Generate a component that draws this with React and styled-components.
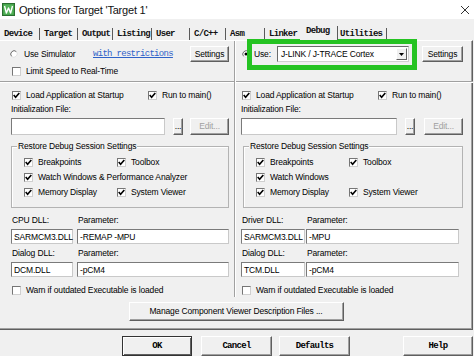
import React from 'react';
import styled, { createGlobalStyle, css } from 'styled-components';

const GlobalStyle = createGlobalStyle`
  html, body { margin: 0; padding: 0; background: #f0f0f0; overflow: hidden; }
  body {
    font-family: "Liberation Sans", Arial, sans-serif;
    font-size: 8.5px;
    letter-spacing: -0.15px;
    color: #000;
  }
  * { box-sizing: border-box; }
`;

const mono = css`
  font-family: "Liberation Mono", "Courier New", monospace;
  font-size: 9px;
  letter-spacing: -0.7px;
`;

const Window = styled.div`
  width: 474px;
  height: 356px;
  display: flex;
  flex-direction: column;
  background: #f0f0f0;
  overflow: hidden;
`;

const TitleBar = styled.div`
  height: 19px;
  flex: none;
  background: #fff;
  display: flex;
  align-items: center;
  padding: 0 4px 0 2px;
`;

const Title = styled.span`
  margin-left: 4px;
  font-size: 11px;
  letter-spacing: -0.2px;
  color: #111;
`;

const Close = styled.div`
  margin-left: auto;
  display: flex;
`;

const TabStrip = styled.div`
  height: 21px;
  flex: none;
  display: flex;
  align-items: flex-end;
`;

const Tab = styled.div`
  ${mono};
  font-weight: 600;
  width: ${(p) => p.$w}px;
  height: 12px;
  line-height: 12px;
  padding-left: 4px;
  white-space: nowrap;
  color: #111;
  border-right: 1px solid #5a5a5a;
  ${(p) =>
    p.$active &&
    css`
      height: 14px;
      line-height: 11px;
      margin: 0 -2px;
      padding-left: 6px;
      position: relative;
      z-index: 1;
      background: #f0f0f0;
    `}
`;

const Panel = styled.div`
  height: 290px;
  width: 473px;
  flex: none;
  display: flex;
  flex-direction: column;
  border-top: 1px solid #fff;
  border-right: 1px solid #5f5f5f;
  border-bottom: 1px solid #5f5f5f;
  box-shadow: inset -1px -1px 0 #a0a0a0;
`;

const Columns = styled.div`
  height: 256px;
  flex: none;
  display: flex;
`;

const Column = styled.div`
  display: flex;
  flex-direction: column;
  padding: 0 ${(p) => p.$pr}px 0 ${(p) => p.$pl}px;
  ${(p) =>
    p.$first
      ? css`
          width: 235px;
          border-right: 1px solid #a0a0a0;
        `
      : css`
          flex: 1;
          border-left: 1px solid #fff;
        `}
`;

const Row = styled.div`
  position: relative;
  display: flex;
  align-items: center;
  flex: none;
  height: ${(p) => p.$h}px;
  margin-top: ${(p) => p.$mt}px;
`;

const Separator = styled.div`
  flex: none;
  height: 2px;
  margin: 5px ${(p) => -p.$r}px 0 ${(p) => -p.$l}px;
  border-top: 1px solid #a0a0a0;
  border-bottom: 1px solid #fff;
`;

const Text = styled.span`
  white-space: nowrap;
  line-height: 10px;
`;

const CheckItem = styled.label`
  display: flex;
  align-items: center;
  height: 10px;
  flex: none;
  width: ${(p) => (p.$w ? `${p.$w}px` : 'auto')};
  margin-left: ${(p) => p.$ml || 0}px;
  gap: 5px;
`;

const Box = styled.span`
  width: 9px;
  height: 9px;
  flex: none;
  background: #fff;
  display: inline-flex;
  align-items: center;
  justify-content: center;
  border: 1px solid;
  border-color: #767676 #cfcfcf #cfcfcf #767676;
`;

const CheckBox = ({ checked }) => (
  <Box>
    {checked && (
      <svg width="7" height="7" viewBox="0 0 7 7">
        <path d="M0.7 3.1 L2.6 5.3 L6.3 0.9" fill="none" stroke="#000" strokeWidth="1.6" />
      </svg>
    )}
  </Box>
);

const Check = ({ checked, label, w, ml }) => (
  <CheckItem $w={w} $ml={ml}>
    <CheckBox checked={checked} />
    <Text>{label}</Text>
  </CheckItem>
);

const RadioWrap = styled.span`
  display: flex;
  align-items: center;
  width: ${(p) => (p.$w ? `${p.$w}px` : 'auto')};
  margin-left: ${(p) => p.$ml}px;
  gap: 6px;
`;

const Radio = ({ checked }) => (
  <svg width="8" height="8" viewBox="0 0 8 8">
    <circle cx="4" cy="4" r="3.4" fill="#fff" />
    <path d="M6.4 1.6 A3.4 3.4 0 0 0 1.6 6.4" fill="none" stroke="#6a6a6a" strokeWidth="1" />
    <path d="M1.6 6.4 A3.4 3.4 0 0 0 6.4 1.6" fill="none" stroke="#e0e0e0" strokeWidth="1" />
    {checked && <circle cx="4" cy="4" r="1.5" fill="#000" />}
  </svg>
);

const Link = styled.a`
  ${mono};
  color: #2f62c8;
  text-decoration: underline;
  white-space: nowrap;
`;

const Button = styled.button`
  font: inherit;
  letter-spacing: inherit;
  width: ${(p) => p.$w}px;
  height: ${(p) => p.$h || 16}px;
  margin-left: ${(p) => (p.$auto ? 'auto' : `${p.$ml || 0}px`)};
  padding: 0 0 1px;
  flex: none;
  background: #f0f0f0;
  color: ${(p) => (p.disabled ? '#a0a0a0' : '#000')};
  border: 1px solid;
  border-color: #fff #5f5f5f #5f5f5f #fff;
  box-shadow: inset -1px -1px 0 #a0a0a0;
  display: flex;
  align-items: center;
  justify-content: center;
  white-space: nowrap;
`;

const DialogButton = styled(Button)`
  ${mono};
  font-weight: 600;
  height: 20px;
  ${(p) =>
    p.$default &&
    css`
      border: 1px solid #333;
      box-shadow: inset 1px 1px 0 #fff, inset -1px -1px 0 #5f5f5f;
    `}
`;

const Field = styled.div`
  width: ${(p) => (p.$w ? `${p.$w}px` : 'auto')};
  height: ${(p) => p.$h || 15}px;
  flex: none;
  background: #fff;
  border: 1px solid;
  border-color: #7a7a7a #c9c9c9 #c9c9c9 #7a7a7a;
  padding-left: 2px;
  display: flex;
  align-items: center;
  white-space: nowrap;
`;

const Highlight = styled.div`
  position: absolute;
  left: 6px;
  top: -7px;
  width: 170px;
  height: 31px;
  border: 5px solid #25c322;
  pointer-events: none;
`;

const UseLabel = styled.span`
  width: 23px;
  margin-left: 4px;
  line-height: 10px;
`;

const Combo = styled.div`
  width: 132px;
  height: 16px;
  background: #fff;
  display: flex;
  align-items: center;
  padding-left: 3px;
  border: 1px solid;
  border-color: #6a6a6a #d0d0d0 #d0d0d0 #6a6a6a;
  white-space: nowrap;
`;

const ComboArrow = styled.span`
  margin-left: auto;
  margin-right: 1px;
  width: 11px;
  height: 12px;
  background: #f0f0f0;
  border: 1px solid;
  border-color: #fff #5f5f5f #5f5f5f #fff;
  display: flex;
  align-items: center;
  justify-content: center;
`;

const Group = styled.div`
  position: relative;
  flex: none;
  margin-top: 11px;
  margin-left: ${(p) => p.$ml}px;
  width: ${(p) => p.$w}px;
  height: 62px;
  border: 1px solid #b3b3b3;
  box-shadow: inset 1px 1px 0 #fff;
  padding: 10px 0 0 12px;
  display: flex;
  flex-direction: column;
  gap: 5px;
`;

const Legend = styled.span`
  position: absolute;
  top: -6px;
  left: 5px;
  padding: 0 1px;
  background: #f0f0f0;
  line-height: 11px;
  white-space: nowrap;
`;

const GroupRow = styled.div`
  display: flex;
  height: 10px;
`;

const DllGrid = styled.div`
  flex: none;
  margin-top: 7px;
  display: grid;
  grid-template-columns: ${(p) => p.$cols};
  grid-template-rows: 10px 15px 10px 15px;
  column-gap: ${(p) => p.$gap}px;
  row-gap: 4px;
`;

const GridLabel = styled.span`
  line-height: 10px;
  padding-left: 1px;
  white-space: nowrap;
`;

const ManageRow = styled.div`
  flex: none;
  display: flex;
  justify-content: center;
  margin-top: 5px;
`;

const Footer = styled.div`
  flex: 1;
  display: flex;
  align-items: flex-start;
  padding: 6px 0 0 122px;
`;

const AppIcon = () => (
  <svg width="13" height="13" viewBox="0 0 13 13">
    <rect x="0.5" y="0.5" width="12" height="12" fill="#3f9a45" stroke="#2a6e30" />
    <rect x="1.5" y="1.5" width="10" height="10" fill="#52b158" />
    <path d="M2.5 3 L4.4 10 L6.5 5 L8.6 10 L10.5 3" fill="none" stroke="#fff" strokeWidth="1.4" strokeLinejoin="round" />
  </svg>
);

const CloseIcon = () => (
  <svg width="10" height="10" viewBox="0 0 10 10">
    <path d="M1 1 L9 9 M9 1 L1 9" stroke="#333" strokeWidth="1" />
  </svg>
);

const tabs = [
  ['Device', 40],
  ['Target', 38],
  ['Output', 35],
  ['Listing', 39],
  ['User', 38],
  ['C/C++', 36],
  ['Asm', 39],
  ['Linker', 37],
  ['Debug', 38, true],
  ['Utilities', 51],
];

const columns = [
  {
    first: true,
    pl: 11,
    pr: 5,
    initW: 154,
    groupMl: 0,
    groupW: 218,
    watch: 'Watch Windows & Performance Analyzer',
    dllCols: '62px 152px',
    dllGap: 4,
    dllLabel: 'CPU DLL:',
    rows: [
      ['SARMCM3.DLL', '-REMAP -MPU'],
      ['DCM.DLL', '-pCM4'],
    ],
  },
  {
    first: false,
    pl: 5,
    pr: 10,
    initW: 156,
    groupMl: 2,
    groupW: 220,
    watch: 'Watch Windows',
    dllCols: '64px 153px',
    dllGap: 1,
    dllLabel: 'Driver DLL:',
    rows: [
      ['SARMCM3.DLL', '-MPU'],
      ['TCM.DLL', '-pCM4'],
    ],
  },
];

function TargetColumn({ c }) {
  return (
    <Column $first={c.first} $pl={c.pl} $pr={c.pr}>
      {c.first ? (
        <Row $h={16} $mt={5}>
          <RadioWrap $w={83} $ml={-1}>
            <Radio />
            <Text>Use Simulator</Text>
          </RadioWrap>
          <Link>with restrictions</Link>
          <Button $w={39} $auto>Settings</Button>
        </Row>
      ) : (
        <Row $h={16} $mt={5}>
          <RadioWrap $ml={1}>
            <Radio checked />
          </RadioWrap>
          <UseLabel>Use:</UseLabel>
          <Combo>
            <Text>J-LINK / J-TRACE Cortex</Text>
            <ComboArrow>
              <svg width="5" height="3" viewBox="0 0 5 3">
                <path d="M0 0 H5 L2.5 3 Z" fill="#000" />
              </svg>
            </ComboArrow>
          </Combo>
          <Button $w={41} $auto>Settings</Button>
          <Highlight />
        </Row>
      )}
      <Row $h={10} $mt={4}>
        {c.first && <Check ml={1} label="Limit Speed to Real-Time" />}
      </Row>
      <Separator $l={c.pl} $r={c.pr} />
      <Row $h={10} $mt={7}>
        <Check ml={1} w={136} checked label="Load Application at Startup" />
        <Check checked label="Run to main()" />
      </Row>
      <Row $h={10} $mt={4}>
        <Text>Initialization File:</Text>
      </Row>
      <Row $h={17} $mt={4}>
        <Field $w={c.initW} $h={17} />
        <Button $w={10} $h={17} $ml={8}>...</Button>
        <Button $w={39} $h={17} $auto disabled>Edit...</Button>
      </Row>
      <Group $ml={c.groupMl} $w={c.groupW}>
        <Legend>Restore Debug Session Settings</Legend>
        <GroupRow>
          <Check w={93} checked label="Breakpoints" />
          <Check checked label="Toolbox" />
        </GroupRow>
        <GroupRow>
          <Check checked label={c.watch} />
        </GroupRow>
        <GroupRow>
          <Check w={93} checked label="Memory Display" />
          <Check checked label="System Viewer" />
        </GroupRow>
      </Group>
      <DllGrid $cols={c.dllCols} $gap={c.dllGap}>
        <GridLabel>{c.dllLabel}</GridLabel>
        <GridLabel>Parameter:</GridLabel>
        <Field>{c.rows[0][0]}</Field>
        <Field>{c.rows[0][1]}</Field>
        <GridLabel>Dialog DLL:</GridLabel>
        <GridLabel>Parameter:</GridLabel>
        <Field>{c.rows[1][0]}</Field>
        <Field>{c.rows[1][1]}</Field>
      </DllGrid>
      <Row $h={10} $mt={8}>
        <Check ml={1} label="Warn if outdated Executable is loaded" />
      </Row>
    </Column>
  );
}

export default function App() {
  return (
    <>
      <GlobalStyle />
      <Window>
        <TitleBar>
          <AppIcon />
          <Title>Options for Target 'Target 1'</Title>
          <Close>
            <CloseIcon />
          </Close>
        </TitleBar>
        <TabStrip>
          {tabs.map(([name, w, active]) => (
            <Tab key={name} $w={w} $active={active}>
              {name}
            </Tab>
          ))}
        </TabStrip>
        <Panel>
          <Columns>
            {columns.map((c) => (
              <TargetColumn key={c.dllLabel} c={c} />
            ))}
          </Columns>
          <ManageRow>
            <Button $w={215} $h={19}>Manage Component Viewer Description Files ...</Button>
          </ManageRow>
        </Panel>
        <Footer>
          <DialogButton $w={70} $default>OK</DialogButton>
          <DialogButton $w={71} $ml={9}>Cancel</DialogButton>
          <DialogButton $w={71} $ml={7}>Defaults</DialogButton>
          <DialogButton $w={70} $ml={53}>Help</DialogButton>
        </Footer>
      </Window>
    </>
  );
}
